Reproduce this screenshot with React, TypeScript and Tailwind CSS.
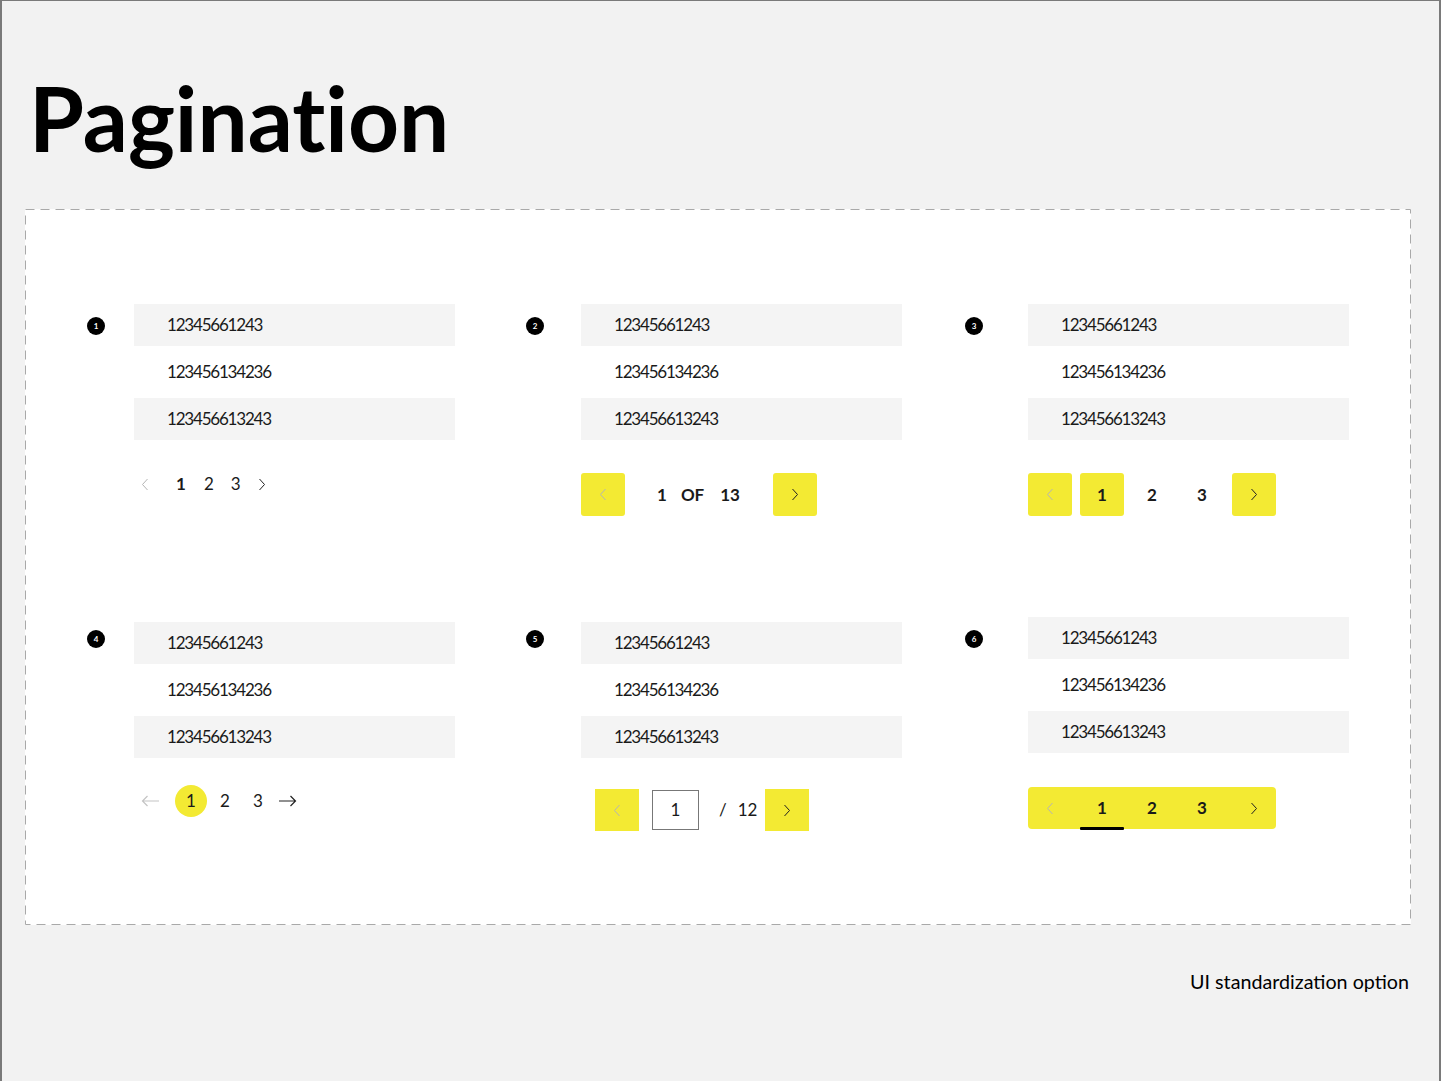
import React from 'react';

const FONT = { fontFamily: 'Lato, "Noto Sans", sans-serif' };

const rows = ['12345661243', '123456134236', '123456613243'];

function Chevron({ dir, muted }: { dir: 'left' | 'right'; muted?: boolean }) {
  return (
    <svg width="8" height="13" viewBox="0 0 8 13" fill="none">
      <polyline
        points={dir === 'left' ? '6.5,1 1.5,6.5 6.5,12' : '1.5,1 6.5,6.5 1.5,12'}
        stroke={muted ? '#b5b5b5' : '#222'}
        strokeWidth="1"
      />
    </svg>
  );
}

function Arrow({ dir, muted }: { dir: 'left' | 'right'; muted?: boolean }) {
  return (
    <svg width="19" height="12" viewBox="0 0 19 12" fill="none">
      {dir === 'left' ? (
        <path d="M18 6H1.5M6.5 1L1.5 6l5 5" stroke={muted ? '#c4c4c4' : '#222'} strokeWidth="1.2" />
      ) : (
        <path d="M1 6h16.5M12.5 1l5 5-5 5" stroke={muted ? '#c4c4c4' : '#222'} strokeWidth="1.2" />
      )}
    </svg>
  );
}

function Badge({ n }: { n: number }) {
  return (
    <div className="w-[18px] h-[18px] rounded-full bg-black text-white text-[8px] font-bold flex items-center justify-center shrink-0">
      {n}
    </div>
  );
}

function List({ shift }: { shift?: boolean }) {
  return (
    <div className={shift ? 'flex flex-col gap-[5px] mt-[5px]' : 'flex flex-col gap-[5px]'}>
      {rows.map((r, i) => (
        <div
          key={i}
          className={
            'h-[42px] w-[321px] pl-[33px] flex items-center text-[17px] text-[#1a1a1a] tracking-[-1.2px] ' +
            (i === 1 ? '' : 'bg-[#f4f4f4]')
          }
        >
          {r}
        </div>
      ))}
    </div>
  );
}

function Pager1() {
  return (
    <div className="mt-[36px] h-[16px] flex items-center text-[17px] text-[#1a1a1a]">
      <div className="ml-[7px] w-[8px] flex"><Chevron dir="left" muted /></div>
      <span className="ml-[27px] font-bold">1</span>
      <span className="ml-[18px]">2</span>
      <span className="ml-[17px]">3</span>
      <div className="ml-[17px] flex"><Chevron dir="right" /></div>
    </div>
  );
}

function Pager2() {
  return (
    <div className="mt-[33px] flex items-center text-[17px] font-bold text-[#1a1a1a]">
      <div className="w-[44px] h-[43px] rounded-[3px] bg-[#f3ea33] flex items-center justify-center">
        <Chevron dir="left" muted />
      </div>
      <span className="ml-[32px]">1</span>
      <span className="ml-[14px]">OF</span>
      <span className="ml-[16px]">13</span>
      <div className="ml-[33px] w-[44px] h-[43px] rounded-[3px] bg-[#f3ea33] flex items-center justify-center">
        <Chevron dir="right" />
      </div>
    </div>
  );
}

function Pager3() {
  return (
    <div className="mt-[33px] flex items-center text-[17px] font-bold text-[#1a1a1a]">
      <div className="w-[44px] h-[43px] rounded-[3px] bg-[#f3ea33] flex items-center justify-center">
        <Chevron dir="left" muted />
      </div>
      <div className="ml-[8px] w-[44px] h-[43px] rounded-[3px] bg-[#f3ea33] flex items-center justify-center">1</div>
      <div className="ml-[6px] w-[44px] h-[43px] flex items-center justify-center">2</div>
      <div className="ml-[6px] w-[44px] h-[43px] flex items-center justify-center">3</div>
      <div className="ml-[8px] w-[44px] h-[43px] rounded-[3px] bg-[#f3ea33] flex items-center justify-center">
        <Chevron dir="right" />
      </div>
    </div>
  );
}

function Pager4() {
  return (
    <div className="mt-[27px] flex items-center text-[17px] text-[#1a1a1a]">
      <div className="ml-[7px] flex"><Arrow dir="left" muted /></div>
      <div className="ml-[15px] w-[32px] h-[32px] rounded-full bg-[#f3ea33] flex items-center justify-center">1</div>
      <span className="ml-[13px]">2</span>
      <span className="ml-[23px]">3</span>
      <div className="ml-[15px] flex"><Arrow dir="right" /></div>
    </div>
  );
}

function Pager5() {
  return (
    <div className="mt-[31px] ml-[14px] flex items-center text-[17px] text-[#1a1a1a]">
      <div className="w-[44px] h-[42px] bg-[#f3ea33] flex items-center justify-center">
        <Chevron dir="left" muted />
      </div>
      <div className="ml-[13px] w-[47px] h-[40px] border border-[#777] bg-white flex items-center justify-center">1</div>
      <span className="ml-[20px]">/</span>
      <span className="ml-[11px]">12</span>
      <div className="ml-[8px] w-[44px] h-[42px] bg-[#f3ea33] flex items-center justify-center">
        <Chevron dir="right" />
      </div>
    </div>
  );
}

function Pager6() {
  return (
    <div className="mt-[34px] w-[248px] h-[42px] rounded-[4px] bg-[#f3ea33] flex items-center text-[17px] font-bold text-[#1a1a1a]">
      <div className="w-[44px] flex justify-center"><Chevron dir="left" muted /></div>
      <div className="ml-[8px] w-[44px] h-[42px] flex items-center justify-center relative">
        1
        <div className="absolute left-0 right-0 bottom-[-1px] h-[3px] bg-black rounded-[1px]" />
      </div>
      <div className="ml-[6px] w-[44px] flex justify-center">2</div>
      <div className="ml-[6px] w-[44px] flex justify-center">3</div>
      <div className="ml-[8px] w-[44px] flex justify-center"><Chevron dir="right" /></div>
    </div>
  );
}

function Cell({ n, gap, children, shift }: { n: number; gap: string; children: React.ReactNode; shift?: boolean }) {
  return (
    <div className={'flex items-start ' + gap}>
      <div className="pt-[13px]">
        <Badge n={n} />
      </div>
      <div className="flex flex-col">
        <List shift={shift} />
        {children}
      </div>
    </div>
  );
}

export default function App() {
  return (
    <div
      className="w-[1441px] h-[1081px] bg-[#f2f2f2] border-t border-l-2 border-r-2 border-[#7a7a7a] flex flex-col"
      style={FONT}
    >
      <h1 className="ml-[27px] mt-[64px] text-[89px] leading-[106px] font-bold text-black [font-variant-ligatures:none]">
        Pagination
      </h1>
      <div className="relative ml-[23px] mt-[38px] w-[1386px] h-[716px] bg-white">
        <svg className="absolute inset-0 pointer-events-none" width="1386" height="716">
          <rect x="0.5" y="0.5" width="1385" height="715" fill="none" stroke="#a9a9a9" strokeDasharray="9 6" />
        </svg>
        <div className="pt-[95px] pl-[62px] grid grid-cols-[439px_439px_auto] grid-rows-[313px_auto]">
          <Cell n={1} gap="gap-[29px]"><Pager1 /></Cell>
          <Cell n={2} gap="gap-[37px]"><Pager2 /></Cell>
          <Cell n={3} gap="gap-[45px]"><Pager3 /></Cell>
          <Cell n={4} gap="gap-[29px]" shift><Pager4 /></Cell>
          <Cell n={5} gap="gap-[37px]" shift><Pager5 /></Cell>
          <Cell n={6} gap="gap-[45px]"><Pager6 /></Cell>
        </div>
      </div>
      <div className="mt-[42px] mr-[30px] self-end text-[19.7px] text-black">UI standardization option</div>
    </div>
  );
}
